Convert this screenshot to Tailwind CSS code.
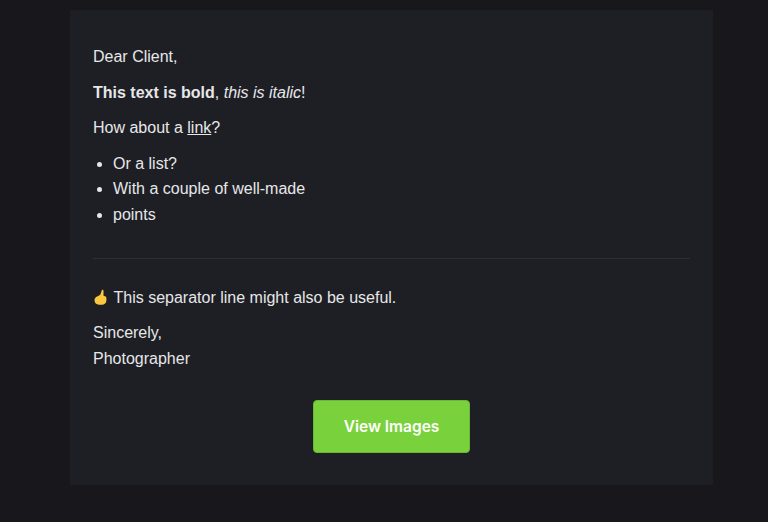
<!DOCTYPE html>
<html lang="en">
<head>
    <meta charset="UTF-8">
    <title>Email preview</title>
    <script src="https://cdn.jsdelivr.net/npm/@tailwindcss/browser@4"></script>
</head>
<body class="bg-[#18181c] h-[522px] overflow-hidden font-['Liberation_Sans',sans-serif] text-[16px] leading-[25.6px] text-[#e6e7e9]">
<div class="ml-[70px] mt-[10px] w-[643px] h-[475px] bg-[#1e1f24] px-[23px] pt-[34px]">
    <p class="mb-[10px]">Dear Client,</p>
    <p class="mb-[10px]"><strong class="font-bold">This text is bold</strong>, <em class="italic">this is italic</em>!</p>
    <p class="mb-[10px]">How about a <a href="#" class="underline">link</a>?</p>
    <ul class="list-disc pl-[20px]">
        <li>Or a list?</li>
        <li>With a couple of well-made</li>
        <li>points</li>
    </ul>
    <hr class="mt-[30px] mb-[26px] border-t border-[#2e2f35]">
    <p class="mb-[10px] flex items-center">
        <svg class="w-[15px] h-[16px] mr-[5.500px]" viewBox="0 0 15 16">
            <path fill="#fcc63f" d="M9 .8c.9-.4 1.500.2 1.500 1.100v4.800l1.500.5c1 .4 1.400 1.100 1.400 2v2.200c0 2.500-1.900 4.300-4.600 4.300H6C3.300 15.700 1.500 13.800 1.500 11.300c0-1.500.6-2.600 1.600-3.400l3-1.500c1.100-.6 1.600-1.400 1.800-2.500z"/>
        </svg>
        <span>This separator line might also be useful.</span>
    </p>
    <p>Sincerely,<br>Photographer</p>
    <div class="flex justify-center mt-[29px]">
        <a href="#" class="flex items-center justify-center w-[157px] h-[53px] rounded-[4px] border border-[#6bb836] bg-[#79d13b] text-white font-semibold font-['Inter',sans-serif] text-[15.5px]">View Images</a>
    </div>
</div>
</body>
</html>
